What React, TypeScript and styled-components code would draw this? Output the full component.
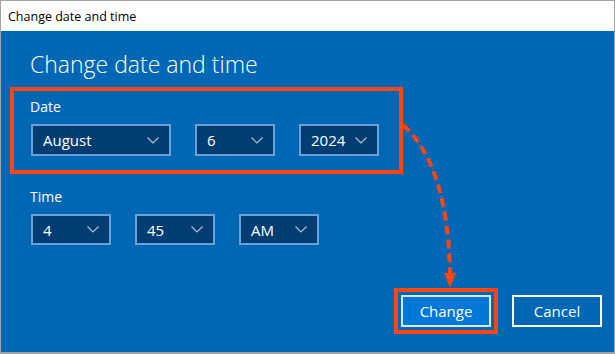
import React from "react";
import styled, { createGlobalStyle } from "styled-components";

const GlobalStyle = createGlobalStyle`
  html, body { margin: 0; padding: 0; }
  body { font-family: "Open Sans", "Noto Sans", sans-serif; }
  * { box-sizing: border-box; }
`;

const RED = "#ff4611";

const Window = styled.div`
  position: relative;
  width: 615px;
  height: 354px;
  display: flex;
  flex-direction: column;
  border: 1px solid #a3a3a3;
  border-bottom-width: 2px;
  background: #fff;
  overflow: hidden;
`;

const TitleBar = styled.div`
  height: 30px;
  display: flex;
  align-items: center;
  padding-left: 7px;
  font-size: 12.5px;
  color: #000;
`;

const Body = styled.div`
  flex: 1;
  display: flex;
  flex-direction: column;
  background: #0067b4;
  color: #fff;
`;

const Heading = styled.h1`
  margin: 19px 0 0 29px;
  font-size: 23px;
  line-height: 28px;
  font-weight: 300;
`;

const Section = styled.div<{ $highlight?: boolean }>`
  width: ${(p) => (p.$highlight ? "393px" : "auto")};
  margin: ${(p) => (p.$highlight ? "9px 0 0 9px" : "13px 0 0 29px")};
  padding: ${(p) => (p.$highlight ? "6px 20px 14px 16px" : "0")};
  border: ${(p) => (p.$highlight ? `4px solid ${RED}` : "none")};
`;

const Label = styled.div`
  font-size: 14px;
  line-height: 20px;
`;

const Row = styled.div<{ $gap: number }>`
  display: flex;
  gap: ${(p) => p.$gap}px;
  margin-top: 7px;
  padding-left: 1px;
`;

const Select = styled.div<{ $w: number; $h: number }>`
  width: ${(p) => p.$w}px;
  height: ${(p) => p.$h}px;
  display: flex;
  align-items: center;
  justify-content: space-between;
  padding: 0 10px 0 10px;
  background: #003d72;
  border: 2px solid #6aa0d6;
  font-size: 15px;
  color: #fff;
`;

const Chevron = () => (
  <svg width="12" height="7" viewBox="0 0 12 7">
    <path d="M0.5 0.5 L6 6 L11.5 0.5" fill="none" stroke="#a9c0d8" strokeWidth="1.2" />
  </svg>
);

const Buttons = styled.div`
  margin-top: auto;
  display: flex;
  align-items: center;
  justify-content: flex-end;
  gap: 14px;
  padding: 0 12px 18px 0;
`;

const Highlight = styled.div`
  padding: 3px;
  border: 4px solid ${RED};
`;

const Button = styled.button<{ $primary?: boolean }>`
  width: 90px;
  height: 32px;
  padding: 0;
  font-family: inherit;
  font-size: 15px;
  color: #fff;
  background: ${(p) => (p.$primary ? "#0078d7" : "transparent")};
  border: 2px solid ${(p) => (p.$primary ? "#d8e9f8" : "#fff")};
`;

const Overlay = styled.svg`
  position: absolute;
  left: -1px;
  top: -1px;
  pointer-events: none;
`;

const Dropdown = ({ w, h = 32, value }: { w: number; h?: number; value: string }) => (
  <Select $w={w} $h={h}>
    <span>{value}</span>
    <Chevron />
  </Select>
);

export default function App() {
  return (
    <>
      <GlobalStyle />
      <Window>
        <TitleBar>Change date and time</TitleBar>
        <Body>
          <Heading>Change date and time</Heading>
          <Section $highlight>
            <Label>Date</Label>
            <Row $gap={24}>
              <Dropdown w={140} value="August" />
              <Dropdown w={80} value="6" />
              <Dropdown w={80} value="2024" />
            </Row>
          </Section>
          <Section>
            <Label>Time</Label>
            <Row $gap={24}>
              <Dropdown w={80} h={31} value="4" />
              <Dropdown w={80} h={31} value="45" />
              <Dropdown w={80} h={31} value="AM" />
            </Row>
          </Section>
          <Buttons>
            <Highlight>
              <Button $primary>Change</Button>
            </Highlight>
            <Button>Cancel</Button>
          </Buttons>
        </Body>
        <Overlay width="615" height="354" viewBox="0 0 615 354">
          <path
            d="M403 125 Q448 165 450 274"
            fill="none"
            stroke={RED}
            strokeWidth="4"
            strokeDasharray="9 5"
          />
          <polygon points="444,273 456,273 450,288" fill={RED} />
        </Overlay>
      </Window>
    </>
  );
}
